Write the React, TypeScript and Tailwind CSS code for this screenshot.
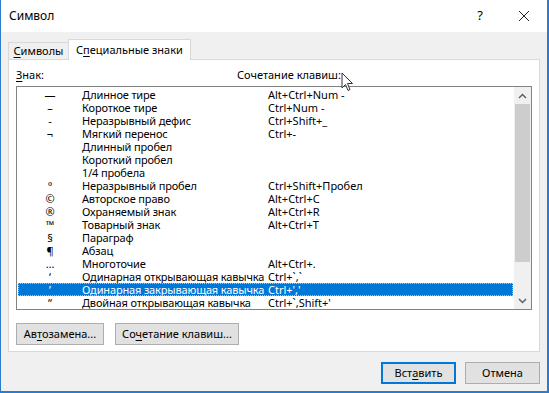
const rows: [string, string, string][] = [
  ["—", "Длинное тире", "Alt+Ctrl+Num -"],
  ["–", "Короткое тире", "Ctrl+Num -"],
  ["-", "Неразрывный дефис", "Ctrl+Shift+_"],
  ["¬", "Мягкий перенос", "Ctrl+-"],
  ["", "Длинный пробел", ""],
  ["", "Короткий пробел", ""],
  ["", "1/4 пробела", ""],
  ["°", "Неразрывный пробел", "Ctrl+Shift+Пробел"],
  ["©", "Авторское право", "Alt+Ctrl+C"],
  ["®", "Охраняемый знак", "Alt+Ctrl+R"],
  ["™", "Товарный знак", "Alt+Ctrl+T"],
  ["§", "Параграф", ""],
  ["¶", "Абзац", ""],
  ["…", "Многоточие", "Alt+Ctrl+."],
  ["‘", "Одинарная открывающая кавычка", "Ctrl+`,`"],
  ["’", "Одинарная закрывающая кавычка", "Ctrl+','"],
  ["“", "Двойная открывающая кавычка", "Ctrl+`,Shift+'"],
];

const SELECTED = 15;

function Btn({ children, w, primary }: { children: React.ReactNode; w: string; primary?: boolean }) {
  return (
    <div
      className={`${w} h-[22px] flex items-center justify-center bg-[#e1e1e1] ${
        primary ? "border-2 border-[#0078d7]" : "border border-[#adadad]"
      }`}
    >
      {children}
    </div>
  );
}

export default function App() {
  return (
    <div className="relative w-[549px] h-[393px] overflow-hidden flex flex-col bg-[#f0f0f0] border-l border-r-2 border-b-2 border-[#2b7bcf] text-[11px] text-black font-['Noto_Sans',sans-serif]">
      {/* title bar */}
      <div className="h-[32px] shrink-0 bg-white flex items-center pl-[8px] text-[12px]">
        <span className="flex-1">Символ</span>
        <span className="w-[44px] text-center text-[13px]">?</span>
        <svg width="44" height="14" viewBox="0 0 44 14" className="mr-[1px]">
          <path d="M17 2 L27 12 M27 2 L17 12" stroke="#222" strokeWidth="1" />
        </svg>
      </div>

      {/* tabs */}
      <div className="flex items-end h-[20px] mt-[7px] ml-[7px] z-10">
        <div className="w-[60px] h-[17px] flex items-center justify-center border-t border-l border-[#d9d9d9] bg-[#f0f0f0]">
          <span>
            <span className="underline underline-offset-2">С</span>имволы
          </span>
        </div>
        <div className="w-[123px] h-[21px] -mb-px flex items-center justify-center bg-white border-t border-l border-r border-[#d9d9d9]">
          <span>
            С<span className="underline underline-offset-2">п</span>ециальные знаки
          </span>
        </div>
      </div>

      {/* panel */}
      <div className="mx-[7px] h-[293px] bg-white border border-[#d9d9d9] px-[7px] pt-[7px] flex flex-col">
        <div className="flex h-[16px] leading-[16px]">
          <span className="w-[221px]">
            <span className="underline underline-offset-2">З</span>нак:
          </span>
          <span>Сочетание клавиш:</span>
        </div>
        <div className="mt-[3px] h-[224px] border border-[#828282] flex">
          <div className="flex-1 pt-[1px] flex flex-col">
            {rows.map(([sym, name, key], i) => (
              <div
                key={i}
                className={`h-[13px] leading-[13px] mx-[1px] flex whitespace-nowrap ${
                  i === SELECTED ? "bg-[#0078d7] text-white outline outline-1 outline-dotted outline-[#9ec9ee] -outline-offset-1" : ""
                }`}
              >
                <span className="w-[64px] text-center">{sym}</span>
                <span className="w-[186px] tracking-[-0.15px]">{name}</span>
                <span>{key}</span>
              </div>
            ))}
          </div>
          {/* scrollbar */}
          <div className="w-[17px] bg-[#f0f0f0] flex flex-col">
            <div className="h-[17px] flex items-center justify-center">
              <svg width="9" height="6" viewBox="0 0 9 6">
                <path d="M1 5 L4.5 1.5 L8 5" fill="none" stroke="#606060" strokeWidth="1.5" />
              </svg>
            </div>
            <div className="h-[158px] mx-[1px] bg-[#cdcdcd]" />
            <div className="flex-1" />
            <div className="h-[17px] flex items-center justify-center">
              <svg width="9" height="6" viewBox="0 0 9 6">
                <path d="M1 1 L4.5 4.5 L8 1" fill="none" stroke="#606060" strokeWidth="1.5" />
              </svg>
            </div>
          </div>
        </div>
        <div className="mt-[13px] flex gap-[11px]">
          <Btn w="w-[88px]">
            <span>
              Ав<span className="underline underline-offset-2">т</span>озамена...
            </span>
          </Btn>
          <Btn w="w-[124px]">
            <span>
              Со<span className="underline underline-offset-2">ч</span>етание клавиш...
            </span>
          </Btn>
        </div>
      </div>

      {/* footer */}
      <div className="mt-[10px] mr-[7px] flex justify-end gap-[9px]">
        <Btn w="w-[75px]" primary>
          <span>
            Вст<span className="underline underline-offset-2">а</span>вить
          </span>
        </Btn>
        <Btn w="w-[75px]">Отмена</Btn>
      </div>

      {/* mouse pointer */}
      <svg className="absolute left-[340px] top-[72px]" width="13" height="20" viewBox="0 0 13 20">
        <path d="M1 1 L1 16 L4.5 12.5 L7 18.5 L9 17.5 L6.5 11.5 L11.5 11.5 Z" fill="white" stroke="#333" strokeWidth="1" strokeLinejoin="round" />
      </svg>
    </div>
  );
}
